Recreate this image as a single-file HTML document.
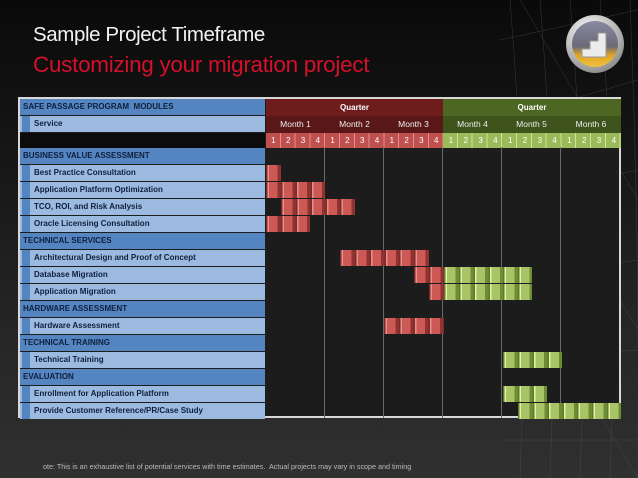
<!DOCTYPE html>
<html><head><meta charset="utf-8"><style>
*{margin:0;padding:0;box-sizing:border-box}
body{width:638px;height:478px;overflow:hidden;position:relative;font-family:"Liberation Sans",sans-serif;
background:linear-gradient(180deg,#0a0a0a 0%,#151515 30%,#262626 70%,#303030 100%)}
.a{position:absolute}
.t1{left:33px;top:23px;color:#f2f2f2;font-size:20.5px;letter-spacing:-0.4px}
.t2{left:33px;top:52px;color:#d4102a;font-size:22.5px;letter-spacing:-0.3px}
.tbl{left:18px;top:97px;width:603px;height:321px;border:2px solid #d8d8d8;background:#1c1c1c}
.sec{background:#5585c0;color:#0d1f3d;font-weight:bold;font-size:8px;padding-left:3px;line-height:16px;height:16px;width:245px;left:0}
.it{background:#9cbae0;color:#0d1f3d;font-weight:bold;font-size:8px;padding-left:14px;line-height:16px;height:16px;width:245px;left:0}
.it:before{content:"";position:absolute;left:2px;top:0;width:8px;height:16px;background:#5585c0}
.r{height:16px;background:repeating-linear-gradient(90deg,#7e2a28 0 1.5px,#e8908a 1.5px 3px,#cc5955 3px 11.5px,#8e3330 11.5px 14.8px)}
.g{height:16px;background:repeating-linear-gradient(90deg,#5e7a2c 0 1.5px,#e4f2a8 1.5px 3px,#a8c466 3px 11.5px,#6e8c34 11.5px 14.8px)}
.vl{width:1px;top:48px;height:271px;background:#6a6a6a}
.wk{font-size:8px;color:#fff;text-align:center;line-height:15px;height:15px;width:14.8px;top:34px}
.mo{font-size:8.5px;color:#eee;text-align:center;line-height:16px;height:16px;top:17px}
</style></head><body>
<svg class="a" style="left:500px;top:0" width="138" height="478" stroke="#555" stroke-width="0.5" fill="none" opacity="0.6">
<path d="M10 0 Q30 240 20 478 M40 0 Q60 240 50 478 M70 0 Q90 240 80 478 M100 0 Q120 240 110 478 M130 0 Q140 240 138 478 M0 40 L138 10 M0 120 L138 80 M0 200 L138 170 M0 280 L138 260 M0 360 L138 350 M0 440 L138 440 M20 0 L138 200 M0 100 L138 330 M0 250 L138 478"/>
</svg>
<div class="a t1">Sample Project Timeframe</div>
<div class="a t2">Customizing your migration project</div>
<div class="a" style="left:566px;top:15px;width:58px;height:58px;border-radius:50%;background:radial-gradient(circle at 40% 30%,#fff,#aaa 60%,#666);"></div>
<div class="a" style="left:572px;top:21px;width:46px;height:46px;border-radius:50%;background:linear-gradient(180deg,#8a8aa0 0%,#6a6a7a 55%,#e0a820 75%,#f0c040 100%);"></div>
<svg class="a" style="left:578px;top:27px" width="34" height="34"><path d="M4 30 L4 22 L12 22 L12 14 L20 14 L20 6 L28 6 L28 30 Z" fill="#ececec" stroke="#999" stroke-width="1"/></svg>

<div class="a tbl">
 <div class="a sec" style="top:0">SAFE PASSAGE PROGRAM&nbsp; MODULES</div>
 <div class="a it" style="top:17px">Service</div>
 <div class="a" style="top:34px;left:0;width:245px;height:15px;background:#0c0c0c"></div>
 <div class="a" style="top:0;left:246px;width:177px;height:17px;background:#6e1c1c;color:#fff;font-size:8px;font-weight:bold;text-align:center;line-height:17px">Quarter</div>
 <div class="a" style="top:0;left:423px;width:178px;height:17px;background:#4d6622;color:#fff;font-size:8px;font-weight:bold;text-align:center;line-height:17px">Quarter</div>
 <div class="a" style="top:17px;left:246px;width:177px;height:17px;background:#5a1717"></div>
 <div class="a" style="top:17px;left:423px;width:178px;height:17px;background:#3e541c"></div>
 <div class="a mo" style="left:246px;width:59px">Month 1</div>
 <div class="a mo" style="left:305px;width:59px">Month 2</div>
 <div class="a mo" style="left:364px;width:59px">Month 3</div>
 <div class="a mo" style="left:423px;width:59px">Month 4</div>
 <div class="a mo" style="left:482px;width:59px">Month 5</div>
 <div class="a mo" style="left:541px;width:60px">Month 6</div>
 <div class="a" style="top:34px;left:246px;width:177px;height:15px;background:repeating-linear-gradient(90deg,#c0504d 0 13.8px,#e09090 13.8px 14.8px)"></div>
 <div class="a" style="top:34px;left:423px;width:178px;height:15px;background:repeating-linear-gradient(90deg,#9bbb59 0 13.8px,#cfe0a0 13.8px 14.8px)"></div>
 <div class="a wk" style="left:246px">1</div><div class="a wk" style="left:260.8px">2</div><div class="a wk" style="left:275.6px">3</div><div class="a wk" style="left:290.4px">4</div>
 <div class="a wk" style="left:305.2px">1</div><div class="a wk" style="left:320px">2</div><div class="a wk" style="left:334.8px">3</div><div class="a wk" style="left:349.6px">4</div>
 <div class="a wk" style="left:364.4px">1</div><div class="a wk" style="left:379.2px">2</div><div class="a wk" style="left:394px">3</div><div class="a wk" style="left:408.8px">4</div>
 <div class="a wk" style="left:423.6px">1</div><div class="a wk" style="left:438.4px">2</div><div class="a wk" style="left:453.2px">3</div><div class="a wk" style="left:468px">4</div>
 <div class="a wk" style="left:482.8px">1</div><div class="a wk" style="left:497.6px">2</div><div class="a wk" style="left:512.4px">3</div><div class="a wk" style="left:527.2px">4</div>
 <div class="a wk" style="left:542px">1</div><div class="a wk" style="left:556.8px">2</div><div class="a wk" style="left:571.6px">3</div><div class="a wk" style="left:586.4px">4</div>

 <div class="a vl" style="left:304px"></div><div class="a vl" style="left:363px"></div><div class="a vl" style="left:422px"></div><div class="a vl" style="left:481px"></div><div class="a vl" style="left:540px"></div>

 <div class="a sec" style="top:49px">BUSINESS VALUE ASSESSMENT</div>
 <div class="a it" style="top:66px">Best Practice Consultation</div>
 <div class="a it" style="top:83px">Application Platform Optimization</div>
 <div class="a it" style="top:100px">TCO, ROI, and Risk Analysis</div>
 <div class="a it" style="top:117px">Oracle Licensing Consultation</div>
 <div class="a sec" style="top:134px">TECHNICAL SERVICES</div>
 <div class="a it" style="top:151px">Architectural Design and Proof of Concept</div>
 <div class="a it" style="top:168px">Database Migration</div>
 <div class="a it" style="top:185px">Application Migration</div>
 <div class="a sec" style="top:202px">HARDWARE ASSESSMENT</div>
 <div class="a it" style="top:219px">Hardware Assessment</div>
 <div class="a sec" style="top:236px">TECHNICAL TRAINING</div>
 <div class="a it" style="top:253px">Technical Training</div>
 <div class="a sec" style="top:270px">EVALUATION</div>
 <div class="a it" style="top:287px">Enrollment for Application Platform</div>
 <div class="a it" style="top:304px">Provide Customer Reference/PR/Case Study</div>

 <div class="a r" style="top:66px;left:246px;width:14.8px"></div>
 <div class="a r" style="top:83px;left:246px;width:59.2px"></div>
 <div class="a r" style="top:100px;left:260.8px;width:74px"></div>
 <div class="a r" style="top:117px;left:246px;width:44.4px"></div>
 <div class="a r" style="top:151px;left:320px;width:88.8px"></div>
 <div class="a r" style="top:168px;left:394px;width:29.6px"></div>
 <div class="a g" style="top:168px;left:423.6px;width:88.8px"></div>
 <div class="a r" style="top:185px;left:408.8px;width:14.8px"></div>
 <div class="a g" style="top:185px;left:423.6px;width:88.8px"></div>
 <div class="a r" style="top:219px;left:364.4px;width:59.2px"></div>
 <div class="a g" style="top:253px;left:482.8px;width:59.2px"></div>
 <div class="a g" style="top:287px;left:482.8px;width:44.4px"></div>
 <div class="a g" style="top:304px;left:497.6px;width:103.6px"></div>
</div>
<div class="a" style="left:43px;top:462px;font-size:7.2px;color:#bbb">ote: This is an exhaustive list of potential services with time estimates.&nbsp; Actual projects may vary in scope and timing</div>
</body></html>
